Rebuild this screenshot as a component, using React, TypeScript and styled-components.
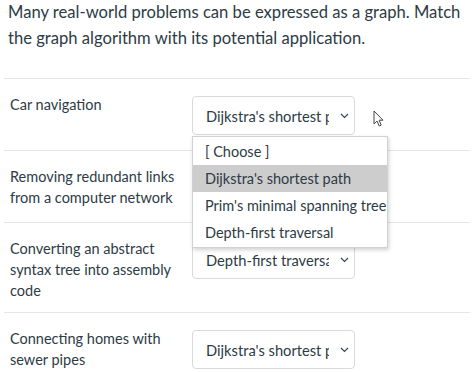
import React from "react";
import styled, { createGlobalStyle } from "styled-components";

const GlobalStyle = createGlobalStyle`
  html, body {
    margin: 0;
    padding: 0;
    background: #ffffff;
  }
  body {
    font-family: Lato, "Open Sans", sans-serif;
    color: #2d3b45;
  }
`;

const Page = styled.div`
  width: 474px;
  padding: 0 4px;
  box-sizing: border-box;
`;

const Question = styled.p`
  margin: 0 0 27px;
  padding: 0 4px;
  font-size: 16.6px;
  line-height: 25.5px;
`;

const Row = styled.div`
  display: flex;
  align-items: flex-start;
  border-top: 1px solid #e4e6e8;
  padding: 15px 6px 11px;
`;

const Label = styled.div`
  flex: 0 0 176px;
  margin-right: 6px;
  font-size: 14.5px;
  line-height: 21px;
`;

const SelectWrap = styled.div`
  position: relative;
  margin: 2px 0 4px;
`;

const SelectBox = styled.div`
  display: flex;
  align-items: center;
  width: 163px;
  height: 39px;
  box-sizing: border-box;
  padding: 0 5px 0 13px;
  border: 1px solid #d7dadd;
  border-radius: 4px;
  background: #fff;
  font-size: 14.7px;
`;

const SelectText = styled.span`
  flex: 0 0 123px;
  overflow: hidden;
  white-space: nowrap;
`;

const Chevron = styled.svg`
  margin-left: auto;
`;

const Menu = styled.ul`
  position: absolute;
  top: 40px;
  left: 0;
  z-index: 5;
  width: 196px;
  margin: 0;
  padding: 1px 0;
  list-style: none;
  background: #fff;
  border: 1px solid #cfd2d4;
  box-shadow: 1px 2px 4px rgba(0, 0, 0, 0.18);
  box-sizing: border-box;
`;

const MenuItem = styled.li<{ $active?: boolean }>`
  height: 27px;
  line-height: 27px;
  padding-left: 12px;
  font-size: 14.5px;
  white-space: nowrap;
  overflow: hidden;
  background: ${(p) => (p.$active ? "#cdcdcd" : "transparent")};
`;

const Cursor = styled.svg`
  position: absolute;
  left: 181px;
  top: 14px;
`;

const options = [
  "[ Choose ]",
  "Dijkstra's shortest path",
  "Prim's minimal spanning tree",
  "Depth-first traversal",
];

const Select = ({ value, open }: { value: string; open?: boolean }) => (
  <SelectWrap>
    <SelectBox>
      <SelectText>{value}</SelectText>
      <Chevron width="9" height="6" viewBox="0 0 9 6">
        <path d="M1 1l3.5 3.5L8 1" fill="none" stroke="#3b4650" strokeWidth="1.2" />
      </Chevron>
    </SelectBox>
    {open && (
      <>
        <Cursor width="12" height="17" viewBox="0 0 12 17">
          <path
            d="M1 1v13l3-3 2.2 5 2-.9-2.1-4.9H10z"
            fill="#fff"
            stroke="#444"
            strokeWidth="1"
            strokeLinejoin="round"
          />
        </Cursor>
        <Menu>
          {options.map((o, i) => (
            <MenuItem key={o} $active={i === 1}>
              {o}
            </MenuItem>
          ))}
        </Menu>
      </>
    )}
  </SelectWrap>
);

const rows = [
  { label: "Car navigation", value: "Dijkstra's shortest path", open: true },
  { label: "Removing redundant links from a computer network", value: "Prim's minimal spanning tree" },
  { label: "Converting an abstract syntax tree into assembly code", value: "Depth-first traversal" },
  { label: "Connecting homes with sewer pipes", value: "Dijkstra's shortest path" },
];

export default function App() {
  return (
    <Page>
      <GlobalStyle />
      <Question>
        Many real-world problems can be expressed as a graph. Match the graph algorithm with its
        potential application.
      </Question>
      {rows.map((r) => (
        <Row key={r.label}>
          <Label>{r.label}</Label>
          <Select value={r.value} open={r.open} />
        </Row>
      ))}
    </Page>
  );
}
